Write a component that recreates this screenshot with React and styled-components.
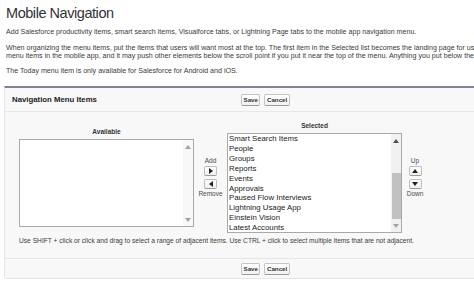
import React from "react";
import styled, { createGlobalStyle } from "styled-components";

const GlobalStyle = createGlobalStyle`
  html, body {
    margin: 0;
    background: #ffffff;
    overflow: hidden;
  }
  body {
    font-family: "Liberation Sans", Arial, sans-serif;
    color: #333333;
  }
`;

const Page = styled.div`
  width: 620px;
  padding: 5px 0 0 4px;
`;

const Title = styled.h1`
  margin: 0 0 0 2px;
  font-size: 14.5px;
  line-height: 17px;
  font-weight: normal;
  letter-spacing: -0.45px;
  color: #333333;
`;

const Text = styled.p`
  margin: ${(p) => p.$top || 8}px 0 0 2px;
  font-size: 7.1px;
  line-height: 7.5px;
  white-space: nowrap;
  color: #3a3a3a;
`;

const Panel = styled.div`
  margin-top: 10.5px;
  background: #f8f8f8;
  border: 1px solid #e6e6e6;
  border-top: 2px solid #7e8494;
  border-radius: 0 0 3px 3px;
`;

const PanelHeader = styled.div`
  display: flex;
  align-items: center;
  height: 23px;
  padding-left: 7px;
  border-bottom: 1px solid #e8e8e8;
`;

const PanelFooter = styled(PanelHeader)`
  height: 19px;
  border-bottom: none;
  border-top: 1px solid #e6e6e6;
  margin-top: 13px;
`;

const HeaderTitle = styled.h2`
  margin: 0;
  width: 229px;
  font-size: 7.8px;
  font-weight: bold;
  color: #222222;
`;

const Spacer = styled.div`
  width: 229px;
`;

const ButtonGroup = styled.div`
  display: flex;
  gap: 4px;
`;

const Button = styled.button`
  height: 12px;
  padding: 0 1.5px;
  font-family: inherit;
  font-size: 6.2px;
  font-weight: bold;
  line-height: 10px;
  color: #333333;
  background: linear-gradient(#ffffff, #f1f1f1);
  border: 1px solid #c4c4c4;
  border-bottom-color: #9a9a9a;
  border-radius: 2px;
`;

const Body = styled.div`
  padding: 10px 0 0 14px;
`;

const ListRow = styled.div`
  display: flex;
  align-items: center;
`;

const ListColumn = styled.div`
  display: flex;
  flex-direction: column;
  gap: 3px;
  width: 175px;
`;

const ListLabel = styled.div`
  text-align: center;
  font-size: 6.5px;
  line-height: 8px;
  font-weight: bold;
  color: #333333;
`;

const Listbox = styled.div`
  display: flex;
  height: ${(p) => p.$height}px;
  box-sizing: border-box;
  background: #ffffff;
  border: 1px solid #a9a9a9;
  overflow: hidden;
`;

const Items = styled.ul`
  flex: 1;
  margin: 0;
  padding: 0 0 0 1px;
  list-style: none;
`;

const Item = styled.li`
  font-size: 7.8px;
  line-height: 9.9px;
  color: #222222;
  white-space: nowrap;
`;

const Scrollbar = styled.div`
  display: flex;
  flex-direction: column;
  width: 10px;
  background: ${(p) => (p.$thumb ? "#f1f1f1" : "#f8f8f8")};
`;

const ScrollButton = styled.div`
  display: flex;
  align-items: center;
  justify-content: center;
  height: 13px;
`;

const Track = styled.div`
  flex: 1;
  display: flex;
  flex-direction: column;
  justify-content: flex-end;
  align-items: center;
`;

const Thumb = styled.div`
  width: 9px;
  height: 46px;
  background: #c1c1c1;
`;

const MoveColumn = styled.div`
  display: flex;
  flex-direction: column;
  align-items: center;
  width: ${(p) => p.$width}px;
  margin-top: -1px;
`;

const MoveLabel = styled.div`
  font-size: 6.5px;
  line-height: 8px;
  color: #4a4a4a;
  margin: ${(p) => (p.$below ? "1px 0 0" : "0 0 1px")};
`;

const ArrowButton = styled.div`
  display: flex;
  align-items: center;
  justify-content: center;
  width: 13px;
  height: 10px;
  box-sizing: border-box;
  margin-top: ${(p) => p.$gap || 0}px;
  background: linear-gradient(#ffffff, #f0f0f0);
  border: 1px solid #bdbdbd;
  border-bottom-color: #9a9a9a;
  border-radius: 2px;
`;

const Hint = styled.div`
  margin-top: 4px;
  font-size: 6.65px;
  line-height: 8px;
  color: #3a3a3a;
  white-space: nowrap;
`;

const arrows = {
  up: "0,4 3,0 6,4",
  down: "0,0 6,0 3,4",
  right: "0,0 4,3 0,6",
  left: "4,0 0,3 4,6",
};

const Arrow = ({ dir, color = "#222", size = 4 }) => {
  const vertical = dir === "up" || dir === "down";
  const w = vertical ? 6 : 4;
  const h = vertical ? 4 : 6;
  return (
    <svg width={(w * size) / 4} height={(h * size) / 4} viewBox={`0 0 ${w} ${h}`}>
      <polygon points={arrows[dir]} fill={color} />
    </svg>
  );
};

const selected = [
  "Smart Search Items",
  "People",
  "Groups",
  "Reports",
  "Events",
  "Approvals",
  "Paused Flow Interviews",
  "Lightning Usage App",
  "Einstein Vision",
  "Latest Accounts",
];

const Buttons = () => (
  <ButtonGroup>
    <Button>Save</Button>
    <Button>Cancel</Button>
  </ButtonGroup>
);

export default function App() {
  return (
    <>
      <GlobalStyle />
      <Page>
        <Title>Mobile Navigation</Title>
        <Text $top={7}>
          Add Salesforce productivity items, smart search items, Visualforce tabs, or Lightning Page
          tabs to the mobile app navigation menu.
        </Text>
        <Text $top={8.5}>
          When organizing the menu items, put the items that users will want most at the top. The
          first item in the Selected list becomes the landing page for users who open the app. The
          Smart Search Items element can expand into a set of eight or more
          <br />
          menu items in the mobile app, and it may push other elements below the scroll point if you
          put it near the top of the menu. Anything you put below the Smart Search Items element
          appears in the Apps section.
        </Text>
        <Text>The Today menu item is only available for Salesforce for Android and iOS.</Text>

        <Panel>
          <PanelHeader>
            <HeaderTitle>Navigation Menu Items</HeaderTitle>
            <Buttons />
          </PanelHeader>

          <Body>
            <ListRow>
              <ListColumn>
                <ListLabel>Available</ListLabel>
                <Listbox $height={88}>
                  <Items />
                  <Scrollbar>
                    <ScrollButton>
                      <Arrow dir="up" color="#a3a3a3" />
                    </ScrollButton>
                    <Track />
                    <ScrollButton>
                      <Arrow dir="down" color="#a3a3a3" />
                    </ScrollButton>
                  </Scrollbar>
                </Listbox>
              </ListColumn>

              <MoveColumn $width={33}>
                <MoveLabel>Add</MoveLabel>
                <ArrowButton>
                  <Arrow dir="right" />
                </ArrowButton>
                <ArrowButton $gap={3}>
                  <Arrow dir="left" />
                </ArrowButton>
                <MoveLabel $below>Remove</MoveLabel>
              </MoveColumn>

              <ListColumn>
                <ListLabel>Selected</ListLabel>
                <Listbox $height={100}>
                  <Items>
                    {selected.map((name) => (
                      <Item key={name}>{name}</Item>
                    ))}
                  </Items>
                  <Scrollbar $thumb>
                    <ScrollButton>
                      <Arrow dir="up" color="#505050" />
                    </ScrollButton>
                    <Track>
                      <Thumb />
                    </Track>
                    <ScrollButton>
                      <Arrow dir="down" color="#a3a3a3" />
                    </ScrollButton>
                  </Scrollbar>
                </Listbox>
              </ListColumn>

              <MoveColumn $width={26}>
                <MoveLabel>Up</MoveLabel>
                <ArrowButton>
                  <Arrow dir="up" />
                </ArrowButton>
                <ArrowButton $gap={3}>
                  <Arrow dir="down" />
                </ArrowButton>
                <MoveLabel $below>Down</MoveLabel>
              </MoveColumn>
            </ListRow>

            <Hint>
              Use SHIFT + click or click and drag to select a range of adjacent items. Use CTRL +
              click to select multiple items that are not adjacent.
            </Hint>
          </Body>

          <PanelFooter>
            <Spacer />
            <Buttons />
          </PanelFooter>
        </Panel>
      </Page>
    </>
  );
}
